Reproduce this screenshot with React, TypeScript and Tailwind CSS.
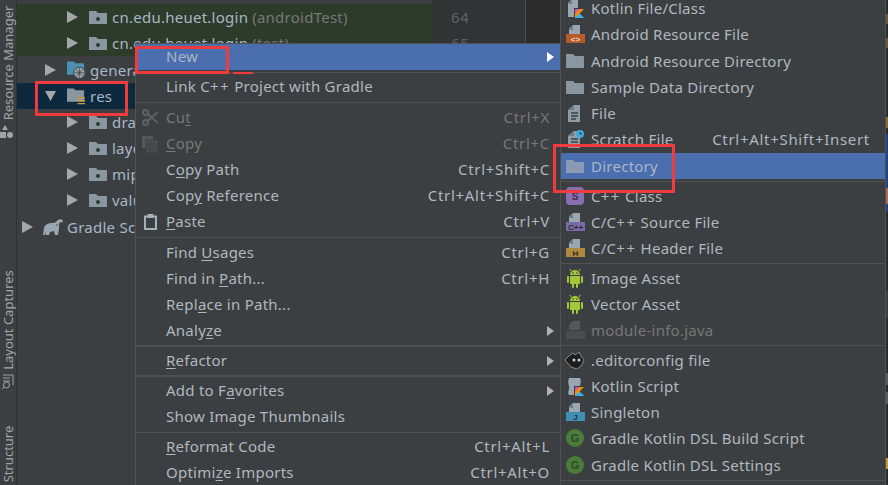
import React from "react";

const font = { fontFamily: '"Noto Sans", "Open Sans", sans-serif', letterSpacing: "0.25px" };

function Folder({ dot = false, color = "#8a97a0", size = 18 }: { dot?: boolean; color?: string; size?: number }) {
  return (
    <svg width={size} height={size * 0.83} viewBox="0 0 18 15">
      <path d="M0 1h7l2 2h9v12H0z" fill={color} />
      {dot && <circle cx="9" cy="9" r="2" fill="#2b3a2a" />}
    </svg>
  );
}

function TreeArrow({ open = false }: { open?: boolean }) {
  return (
    <svg width="11" height="12" viewBox="0 0 11 12">
      {open ? <path d="M0 1h11L5.500 11z" fill="#a5a7a9" /> : <path d="M0 0l11 6L0 12z" fill="#a5a7a9" />}
    </svg>
  );
}

function TreeRow({ indent, label, dim, icon, bg, open, h = 26 }: { indent: string; label: string; dim?: string; icon?: React.ReactNode; bg?: string; open?: boolean; h?: number }) {
  return (
    <div className={`flex items-center ${indent} ${bg ?? ""}`} style={{ height: h }}>
      <TreeArrow open={open} />
      <div className="ml-[11px] w-[19px] mr-[4px] flex items-center">{icon ?? <Folder dot />}</div>
      <span className="text-[#a9b7c6] whitespace-nowrap">{label}</span>
      {dim && <span className="text-[#787878] ml-1 whitespace-nowrap">{dim}</span>}
    </div>
  );
}

function U({ children }: { children: string }) {
  return <span className="underline underline-offset-2">{children}</span>;
}

function PP() {
  return <span className="tracking-[1.5px]">++</span>;
}

function Sep({ h = 4, strong = false }: { h?: number; strong?: boolean }) {
  return (
    <div className="flex items-center" style={{ height: h }}>
      <div className={`w-full ${strong ? "h-[2px] bg-[#4d4f51]" : "h-px bg-[#515151]"}`} />
    </div>
  );
}

function MenuRow({ icon, children, sc, arrow, active, disabled, h = 26, up = false, pad = "pl-[30px]", end = "pr-[10px]" }: { icon?: React.ReactNode; children: React.ReactNode; sc?: string; arrow?: boolean; active?: boolean; disabled?: boolean; h?: number; up?: boolean; pad?: string; end?: string }) {
  const tone = disabled ? "text-[#777777]" : active ? "text-[#aab6c8]" : "text-[#b0b8bf]";
  const shift = up ? "-translate-y-px" : "";
  return (
    <div className={`relative flex items-center ${pad} ${end} ${active ? "bg-[#4b6eaf]" : ""}`} style={{ height: h }}>
      {icon && <div className="absolute left-[4px] top-0 bottom-0 w-[20px] flex items-center justify-center">{icon}</div>}
      <span className={`whitespace-nowrap leading-[16px] ${tone} ${shift}`}>{children}</span>
      <span className="flex-1" />
      {sc && <span className={`whitespace-nowrap leading-[16px] tracking-[0.7px] ${tone} ${shift}`}>{sc}</span>}
      {arrow && (
        <svg className="absolute right-[6px]" width="7" height="10" viewBox="0 0 7 10">
          <path d="M0 0l7 5-7 5z" fill={active ? "#ffffff" : "#afb1b3"} />
        </svg>
      )}
    </div>
  );
}

function FileBadge({ color, label, labelColor = "#2b2b2b" }: { color: string; label: string; labelColor?: string }) {
  return (
    <svg width="19" height="19" viewBox="0 0 19 19">
      <path d="M7 0h7v9H3V4z" fill="#9aa7b0" />
      <path d="M7 1v4H3z" fill="#6e787f" />
      <rect x="0" y="9" width="19" height="9" fill={color} />
      <text x="9.500" y="16.500" fontSize="8" fontWeight="700" textAnchor="middle" fill={labelColor} fontFamily="Liberation Sans" letterSpacing="0">{label}</text>
    </svg>
  );
}

function KotlinMark() {
  return (
    <g>
      <path d="M9 10h9l-4.500 4.500L18 19H9z" fill="#f88909" />
      <path d="M9 10h4.500L9 14.500z" fill="#c757bc" />
      <path d="M9 19l4.500-4.500L18 19z" fill="#29b6f6" />
    </g>
  );
}

function KotlinFile() {
  return (
    <svg width="18" height="19" viewBox="0 0 18 19">
      <path d="M6 0h6v9H8v9H2V4z" fill="#9aa7b0" />
      <path d="M6 1v4H2z" fill="#6e787f" />
      <KotlinMark />
    </svg>
  );
}

function KotlinScript() {
  return (
    <svg width="18" height="19" viewBox="0 0 18 19">
      <path d="M3 1h11c1 2 1 4 0 8H8v9H3c-2-3 1-6 0-9-1-3-1-5 0-8z" fill="#9aa7b0" />
      <KotlinMark />
    </svg>
  );
}

function PlainFile({ clock = false }: { clock?: boolean }) {
  return (
    <svg width="18" height="19" viewBox="0 0 18 19">
      <path d="M8 1h6v17H2V6z" fill="#8f9ca5" />
      <path d="M8 2v4H3z" fill="#6e787f" />
      <path d="M5 9h7M5 12h7M5 15h5" stroke="#3c3f41" strokeWidth="1.300" />
      {clock && <circle cx="14" cy="4" r="4" fill="#40a9e0" />}
      {clock && <path d="M14 2v2h2" stroke="#1d3b4d" fill="none" />}
    </svg>
  );
}

function Android() {
  return (
    <svg width="16" height="19" viewBox="0 0 16 19">
      <path d="M3 6a5 5 0 0 1 10 0z" fill="#a4c639" />
      <path d="M4 2L3 0M12 2l1-2" stroke="#a4c639" />
      <rect x="3" y="7" width="10" height="8" fill="#a4c639" />
      <rect x="0" y="7" width="2" height="7" rx="1" fill="#a4c639" />
      <rect x="14" y="7" width="2" height="7" rx="1" fill="#a4c639" />
      <rect x="5" y="14" width="2" height="5" rx="1" fill="#a4c639" />
      <rect x="9" y="14" width="2" height="5" rx="1" fill="#a4c639" />
      <circle cx="6" cy="4" r=".8" fill="#3c3f41" />
      <circle cx="10" cy="4" r=".8" fill="#3c3f41" />
    </svg>
  );
}

function GradleG() {
  return (
    <svg width="18" height="18" viewBox="0 0 18 18">
      <circle cx="9" cy="9" r="9" fill="#4a7c3a" />
      <text x="9" y="13" fontSize="11" fontWeight="700" textAnchor="middle" fill="#2e4a28" fontFamily="Liberation Sans" letterSpacing="0">G</text>
    </svg>
  );
}

function Red({ className }: { className: string }) {
  return <div className={`absolute border-[3px] border-[#f03a3d] ${className}`} />;
}

export default function App() {
  return (
    <div className="relative w-[888px] h-[485px] overflow-hidden bg-[#3c3f41] flex text-[15px] leading-[26px]" style={font}>
      <div className="w-[17px] shrink-0 border-r border-[#2f3133] relative text-[#a0a4a8] text-[13px] tracking-normal">
        <div className="absolute left-0 top-[5px] w-[16px] h-[115px] flex items-center justify-center">
          <span className="-rotate-90 whitespace-nowrap leading-[14px]">Resource Manager</span>
        </div>
        <svg className="absolute left-0 top-[125px]" width="13" height="14" viewBox="0 0 13 14">
          <path d="M5 0l3 5H2z" fill="#a0a4a8" />
          <rect x="0" y="7" width="6" height="6" fill="#a0a4a8" />
          <circle cx="10" cy="10" r="3" fill="#a0a4a8" />
        </svg>
        <div className="absolute left-0 top-[260px] w-[16px] h-[120px] flex items-center justify-center">
          <span className="-rotate-90 whitespace-nowrap leading-[14px]">Layout Captures</span>
        </div>
        <svg className="absolute left-[2px] top-[374px]" width="12" height="16" viewBox="0 0 12 16">
          <path d="M1 1h10v10M1 4h7M1 7h7" stroke="#a0a4a8" fill="none" />
          <circle cx="4.500" cy="11" r="3" stroke="#a0a4a8" fill="none" />
          <path d="M2 13l-2 2" stroke="#a0a4a8" />
        </svg>
        <div className="absolute left-0 top-[424px] w-[16px] h-[60px] flex items-center justify-center">
          <span className="-rotate-90 whitespace-nowrap leading-[14px]">Structure</span>
        </div>
      </div>

      <div className="w-[415px] shrink-0 pt-[4px]">
        <TreeRow indent="pl-[50px]" bg="bg-[#2d3b2a]" label="cn.edu.heuet.login" dim="(androidTest)" />
        <TreeRow indent="pl-[50px]" bg="bg-[#2d3b2a]" label="cn.edu.heuet.login" dim="(test)" />
        <TreeRow
          indent="pl-[28px]"
          h={27}
          label="generatedJava"
          icon={
            <svg width="20" height="19" viewBox="0 0 20 19">
              <path d="M0 1h7l2 2h9v12H0z" fill="#4a90b0" />
              <circle cx="13" cy="13" r="6" fill="#9aa7b0" stroke="#3c3f41" />
              <path d="M13 8v10M8 13h10M9.500 9.500l7 7M16.500 9.500l-7 7" stroke="#3c3f41" strokeWidth=".8" />
            </svg>
          }
        />
        <TreeRow
          indent="pl-[28px]"
          bg="bg-[#0d293e]"
          open
          label="res"
          icon={
            <svg width="20" height="19" viewBox="0 0 20 19">
              <path d="M0 1h7l2 2h9v12H0z" fill="#8a97a0" />
              <path d="M11 11h8M11 14h8M11 17h8" stroke="#c79a3c" strokeWidth="1.500" />
            </svg>
          }
        />
        <TreeRow indent="pl-[50px]" label="drawable" />
        <TreeRow indent="pl-[50px]" label="layout" />
        <TreeRow indent="pl-[50px]" label="mipmap" />
        <TreeRow indent="pl-[50px]" label="values" />
        <TreeRow
          indent="pl-[5px]"
          h={28}
          label="Gradle Scripts"
          icon={
            <svg className="shrink-0 -ml-[1px]" width="20" height="16" viewBox="0 0 20 16">
              <path d="M0 16L1 9C2 5 6 4 10 4C12 4 13 3 15 1C17 0 19 0 20 2L19 4C18 2 17 3 16 5L16 10L15 16L12 16L11 12L7 13L6 16L3 16L3 13L2 16Z" fill="#9aa7b0" />
              <circle cx="14" cy="6" r=".8" fill="#3c3f41" />
            </svg>
          }
        />
      </div>

      <div className="w-[94px] shrink-0 bg-[#313335] border-r border-[#515151] pt-[4px] pl-[19px] text-[#606366] tracking-[0.7px]">
        <div className="h-[26px] flex items-center">64</div>
        <div className="h-[26px] flex items-center">65</div>
      </div>
      <div className="flex-1 bg-[#2b2b2b]" />

      <div className="absolute left-[886px] top-0 w-[2px] h-[485px] bg-[#2b2b2b]">
        <div className="absolute top-[14px] h-[10px] w-full bg-[#6b5a3a]" />
        <div className="absolute top-[38px] h-[10px] w-full bg-[#6b5a3a]" />
        <div className="absolute top-[117px] h-[11px] w-full bg-[#8a6a3a]" />
        <div className="absolute top-[134px] h-[78px] w-full bg-[#214283]" />
        <div className="absolute top-[188px] h-[16px] w-full bg-[#b06a5a]" />
        <div className="absolute top-[291px] h-[27px] w-full bg-[#3c3f41]" />
        <div className="absolute top-[373px] h-[12px] w-full bg-[#5a5d60]" />
        <div className="absolute top-[392px] h-[12px] w-full bg-[#5a5d60]" />
        <div className="absolute top-[458px] h-[11px] w-full bg-[#c89a3a]" />
      </div>

      <div className="absolute left-[135px] top-[43px] w-[426px] h-[450px] bg-[#3c3f41] border border-[#515151]">
        <MenuRow up active arrow>New</MenuRow>
        <Sep />
        <MenuRow up><>Link C<PP /> Project with Gradle</></MenuRow>
        <Sep />
        <MenuRow up h={27} disabled sc="Ctrl+X" icon={
          <svg width="17" height="17" viewBox="0 0 17 17" stroke="#5e6163" strokeWidth="2" fill="none">
            <circle cx="3.500" cy="3.500" r="2.500" />
            <circle cx="3.500" cy="13.500" r="2.500" />
            <path d="M5.500 5L16 14M5.500 12L16 3" />
          </svg>
        }><>Cu<U>t</U></></MenuRow>
        <MenuRow up disabled sc="Ctrl+C" icon={
          <svg width="16" height="17" viewBox="0 0 16 17">
            <rect x="0" y="0" width="11" height="12" fill="#55585a" />
            <rect x="4" y="4" width="12" height="13" fill="#4a4d4f" stroke="#3c3f41" />
            <path d="M6.500 8h7M6.500 11h7M6.500 14h7" stroke="#3c3f41" />
          </svg>
        }><><U>C</U>opy</></MenuRow>
        <MenuRow up sc="Ctrl+Shift+C"><>C<U>o</U>py Path</></MenuRow>
        <MenuRow up sc="Ctrl+Alt+Shift+C"><>Cop<U>y</U> Reference</></MenuRow>
        <MenuRow up sc="Ctrl+V" icon={
          <svg width="13" height="16" viewBox="0 0 13 16">
            <rect x="1" y="2.500" width="11" height="12.500" fill="none" stroke="#a9b0b6" strokeWidth="2" />
            <rect x="3.500" y="0" width="6" height="4" fill="#a9b0b6" />
          </svg>
        }><><U>P</U>aste</></MenuRow>
        <Sep h={5} />
        <MenuRow up sc="Ctrl+G"><>Find <U>U</U>sages</></MenuRow>
        <MenuRow up sc="Ctrl+H"><>Find in <U>P</U>ath...</></MenuRow>
        <MenuRow up><>Repl<U>a</U>ce in Path...</></MenuRow>
        <MenuRow up arrow><>Analy<U>z</U>e</></MenuRow>
        <Sep strong />
        <MenuRow up arrow><><U>R</U>efactor</></MenuRow>
        <Sep strong />
        <MenuRow up arrow><>Add to F<U>a</U>vorites</></MenuRow>
        <MenuRow up>Show Image Thumbnails</MenuRow>
        <Sep />
        <MenuRow up sc="Ctrl+Alt+L"><><U>R</U>eformat Code</></MenuRow>
        <MenuRow up sc="Ctrl+Alt+O"><>Optimi<U>z</U>e Imports</></MenuRow>
      </div>

      <div className="absolute left-[560px] top-[-5px] w-[326px] h-[500px] bg-[#3c3f41] border-x border-[#515151]">
        <MenuRow end="pr-[15px]" icon={<KotlinFile />}>Kotlin File/Class</MenuRow>
        <MenuRow end="pr-[15px]" icon={<FileBadge color="#b85a25" label="<>" labelColor="#e8d8c8" />}>Android Resource File</MenuRow>
        <MenuRow end="pr-[15px]" h={27} icon={<Folder />}>Android Resource Directory</MenuRow>
        <MenuRow end="pr-[15px]" icon={<Folder />}>Sample Data Directory</MenuRow>
        <MenuRow end="pr-[15px]" icon={<PlainFile />}>File</MenuRow>
        <MenuRow end="pr-[15px]" up h={27} sc="Ctrl+Alt+Shift+Insert" icon={<PlainFile clock />}>Scratch File</MenuRow>
        <MenuRow end="pr-[15px]" active icon={<Folder color="#8a9ab4" />}>Directory</MenuRow>
        <Sep />
        <MenuRow end="pr-[15px]" icon={
          <svg width="18" height="18" viewBox="0 0 18 18">
            <rect width="18" height="18" rx="4" fill="#8a6fb0" />
            <text x="9" y="13" fontSize="10" fontWeight="700" textAnchor="middle" fill="#3c3050" fontFamily="Liberation Sans" letterSpacing="0">S</text>
          </svg>
        }><>C<PP /> Class</></MenuRow>
        <MenuRow end="pr-[15px]" icon={<FileBadge color="#7b6aa8" label="C++" />}><>C/C<PP /> Source File</></MenuRow>
        <MenuRow end="pr-[15px]" icon={<FileBadge color="#b08a3e" label="H" />}><>C/C<PP /> Header File</></MenuRow>
        <Sep />
        <MenuRow end="pr-[15px]" icon={<Android />}>Image Asset</MenuRow>
        <MenuRow end="pr-[15px]" icon={<Android />}>Vector Asset</MenuRow>
        <MenuRow end="pr-[15px]" disabled icon={
          <svg width="19" height="19" viewBox="0 0 19 19">
            <path d="M7 0h7v9H3V4z" fill="#55585a" />
            <rect y="10" width="19" height="8" fill="#4a4d4f" />
          </svg>
        }>module-info.java</MenuRow>
        <Sep />
        <MenuRow end="pr-[15px]" icon={
          <svg width="20" height="17" viewBox="0 0 20 17">
            <path d="M0 8L5 3l3-2 2 2 4-3 2 4 3 4-3 6-4 3-6-2z" fill="#1d1d1d" stroke="#a9b0b6" strokeWidth=".7" />
            <circle cx="9" cy="8" r="1.500" fill="#d0d0d0" />
            <circle cx="14" cy="8" r="1.500" fill="#d0d0d0" />
          </svg>
        }>.editorconfig file</MenuRow>
        <MenuRow end="pr-[15px]" icon={<KotlinScript />}>Kotlin Script</MenuRow>
        <MenuRow end="pr-[15px]" icon={<FileBadge color="#3f8fb5" label="J" />}>Singleton</MenuRow>
        <MenuRow end="pr-[15px]" icon={<GradleG />}>Gradle Kotlin DSL Build Script</MenuRow>
        <MenuRow end="pr-[15px]" h={27} icon={<GradleG />}>Gradle Kotlin DSL Settings</MenuRow>
        <Sep />
      </div>

      <Red className="left-[35px] top-[81px] w-[93px] h-[35px]" />
      <Red className="left-[135px] top-[46px] w-[94px] h-[28px]" />
      <div className="absolute left-[233px] top-[72px] w-[20px] h-[2px] bg-[#f03a3d]" />
      <Red className="left-[553px] top-[144px] w-[122px] h-[49px]" />
    </div>
  );
}
